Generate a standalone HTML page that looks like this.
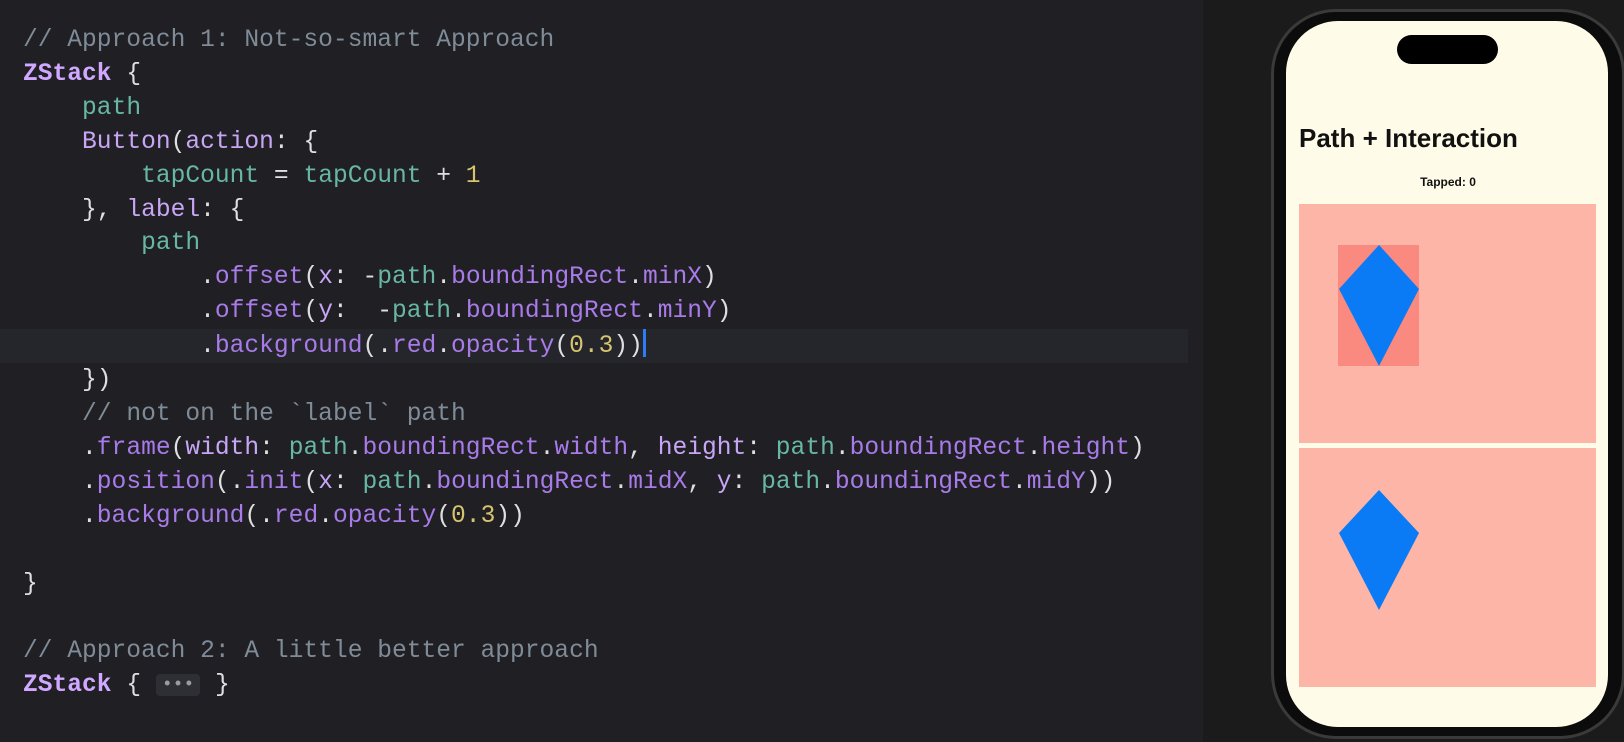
<!DOCTYPE html>
<html><head><meta charset="utf-8"><style>
html,body{margin:0;padding:0;width:1624px;height:742px;overflow:hidden;background:#1c1c1e}
#ed{position:absolute;left:0;top:0;width:1203px;height:742px;background:#1f1f24}
#cur{position:absolute;left:0;top:329px;width:1188px;height:34px;background:#25262c}
#code{position:absolute;left:23px;top:24px;font-family:"Liberation Mono",monospace;font-size:24.6px;line-height:33.9px;color:#dfdfe0;white-space:pre;margin:0}
.c{color:#7f8c98}.k{color:#d0a8ff;font-weight:bold}.t{color:#67b7a4}.m{color:#a87be8}.n{color:#d6c46e}.l{color:#c8a6f5}
.caret{display:inline-block;width:3px;height:28px;background:#2f7bf5;vertical-align:-5px}
.fold{display:inline-block;background:#2e2f35;color:#9a9aa0;border-radius:4px;font-size:18px;line-height:22px;padding:0 6px;vertical-align:2px}
#right{position:absolute;left:1203px;top:0;width:421px;height:742px;background:#1b1b1b}
#frame{position:absolute;left:1274px;top:12px;width:348px;height:724px;border-radius:62px;background:#0c0c0c;box-shadow:0 0 0 3px #3a3a3a}
#screen{position:absolute;left:1286px;top:21px;width:322px;height:706px;border-radius:52px;background:#fffbe9;overflow:hidden}
#island{position:absolute;left:1397px;top:35px;width:101px;height:29px;border-radius:15px;background:#000}
#title{position:absolute;left:1299px;top:123px;font-family:"Liberation Sans",sans-serif;font-weight:bold;font-size:26px;color:#111}
#tap{position:absolute;left:1400px;width:96px;text-align:center;top:175px;font-family:"Liberation Sans",sans-serif;font-weight:bold;font-size:12px;color:#111}
.r{position:absolute;left:1299px;width:297px;background:#fdb5a8}
</style></head><body>
<div id="ed"></div><div id="cur"></div>
<pre id="code"><span class="c">// Approach 1: Not-so-smart Approach</span>
<span class="k">ZStack</span> {
    <span class="t">path</span>
    <span class="l">Button</span>(<span class="l">action</span>: {
        <span class="t">tapCount</span> = <span class="t">tapCount</span> + <span class="n">1</span>
    }, <span class="l">label</span>: {
        <span class="t">path</span>
            .<span class="m">offset</span>(<span class="l">x</span>: -<span class="t">path</span>.<span class="m">boundingRect</span>.<span class="m">minX</span>)
            .<span class="m">offset</span>(<span class="l">y</span>:  -<span class="t">path</span>.<span class="m">boundingRect</span>.<span class="m">minY</span>)
            .<span class="m">background</span>(.<span class="m">red</span>.<span class="m">opacity</span>(<span class="n">0.3</span>))<span class="caret"></span>
    })
    <span class="c">// not on the `label` path</span>
    .<span class="m">frame</span>(<span class="l">width</span>: <span class="t">path</span>.<span class="m">boundingRect</span>.<span class="m">width</span>, <span class="l">height</span>: <span class="t">path</span>.<span class="m">boundingRect</span>.<span class="m">height</span>)
    .<span class="m">position</span>(.<span class="m">init</span>(<span class="l">x</span>: <span class="t">path</span>.<span class="m">boundingRect</span>.<span class="m">midX</span>, <span class="l">y</span>: <span class="t">path</span>.<span class="m">boundingRect</span>.<span class="m">midY</span>))
    .<span class="m">background</span>(.<span class="m">red</span>.<span class="m">opacity</span>(<span class="n">0.3</span>))

}

<span class="c">// Approach 2: A little better approach</span>
<span class="k">ZStack</span> { <span class="fold">•••</span> }</pre>
<div id="right"></div>
<div id="frame"></div>
<div id="screen"></div>
<div id="island"></div>
<div id="title">Path + Interaction</div>
<div id="tap">Tapped: 0</div>
<div class="r" style="top:204px;height:239px"></div>
<div class="r" style="top:448px;height:239px"></div>
<svg style="position:absolute;left:0;top:0" width="1624" height="742">
<rect x="1338" y="245" width="81" height="121" fill="#fa8a80"/>
<polygon points="1379,245 1419,289 1379,366 1339,289" fill="#0a7bf5"/>
<polygon points="1379,490 1419,533 1379,610 1339,533" fill="#0a7bf5"/>
</svg>
</body></html>
